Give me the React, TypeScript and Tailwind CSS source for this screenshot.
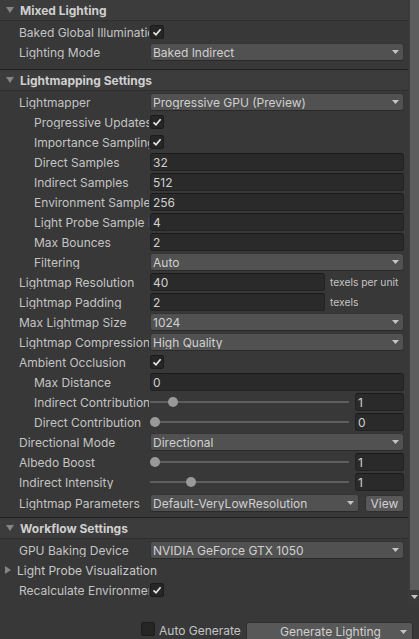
import React from "react";

const Arrow = () => (
  <svg width="7" height="4" viewBox="0 0 7 4" className="shrink-0">
    <path d="M0 0 L7 0 L3.5 4 Z" fill="#c4c4c4" />
  </svg>
);

const Header = ({ title }: { title: string }) => (
  <div className="h-[20px] flex items-center bg-[#3c3c3c] border-b border-[#2e2e2e] box-content">
    <svg width="8" height="6" viewBox="0 0 8 6" className="ml-[6px] mr-[6px] shrink-0">
      <path d="M0 0 L8 0 L4 6 Z" fill="#858585" />
    </svg>
    <span className="font-bold text-[#cfcfcf] pt-[1px]">{title}</span>
  </div>
);

const Row = ({
  label,
  indent = false,
  children,
  h = "h-[20px]",
}: {
  label: string;
  indent?: boolean;
  children?: React.ReactNode;
  h?: string;
}) => (
  <div className={`${h} flex items-center`}>
    <div className={`w-[150px] shrink-0 pr-[1px] pt-[1px] ${indent ? "pl-[34px]" : "pl-[19px]"}`}>
      <div className="overflow-hidden whitespace-nowrap">{label}</div>
    </div>
    <div className="flex-1 min-w-0 pr-[4px] flex items-center">{children}</div>
  </div>
);

const Dropdown = ({ value, className = "flex-1" }: { value: string; className?: string }) => (
  <div
    className={`${className} h-[18px] rounded-[3px] bg-[#515151] border border-[#353535] border-b-[#2a2a2a] flex items-center pl-[2px] pr-[4px] text-[#d0d0d0]`}
  >
    <span className="flex-1 overflow-hidden whitespace-nowrap pt-[1px]">{value}</span>
    <Arrow />
  </div>
);

const Field = ({ value, className = "flex-1" }: { value: string; className?: string }) => (
  <div
    className={`${className} h-[18px] rounded-[3px] bg-[#2a2a2a] border border-[#222222] border-t-[#1a1a1a] flex items-center pl-[2px] pt-[1px] text-[#d0d0d0]`}
  >
    {value}
  </div>
);

const Check = ({ checked = true }: { checked?: boolean }) => (
  <div className="w-[14px] h-[14px] rounded-[2px] bg-[#262626] border border-[#1c1c1c] flex items-center justify-center">
    {checked && (
      <svg width="10" height="10" viewBox="0 0 10 10">
        <path d="M1.5 5.3 L4 7.8 L8.6 2.2" stroke="#e4e4e4" strokeWidth="1.7" fill="none" />
      </svg>
    )}
  </div>
);

const Slider = ({ pos, value }: { pos: number; value: string }) => (
  <div className="flex-1 flex items-center">
    <div className="relative flex-1 h-[18px] mr-[6px]">
      <div className="absolute left-[0px] right-0 top-[8px] h-[2px] bg-[#5e5e5e]" />
      <div
        className="absolute top-[4px] w-[10px] h-[10px] rounded-full bg-[#999999]"
        style={{ left: pos }}
      />
    </div>
    <Field value={value} className="w-[49px]" />
  </div>
);

export default function App() {
  return (
    <div className="w-[419px] h-[639px] overflow-hidden bg-[#383838] flex flex-col text-[12px] text-[#c4c4c4] font-['Inter',sans-serif] leading-none">
      <div className="flex h-[605px] shrink-0">
        <div className="w-[408px] shrink-0 flex flex-col overflow-hidden">
          <Header title="Mixed Lighting" />
          <div className="pt-[1px] pb-[7px] border-b border-[#202020]">
            <Row label="Baked Global Illumination">
              <Check />
            </Row>
            <Row label="Lighting Mode">
              <Dropdown value="Baked Indirect" />
            </Row>
          </div>
          <Header title="Lightmapping Settings" />
          <div className="pt-[1px] pb-[3px] border-b border-[#202020]">
            <Row label="Lightmapper">
              <Dropdown value="Progressive GPU (Preview)" />
            </Row>
            <Row label="Progressive Updates" indent>
              <Check />
            </Row>
            <Row label="Importance Sampling" indent>
              <Check />
            </Row>
            <Row label="Direct Samples" indent>
              <Field value="32" />
            </Row>
            <Row label="Indirect Samples" indent>
              <Field value="512" />
            </Row>
            <Row label="Environment Samples" indent>
              <Field value="256" />
            </Row>
            <Row label="Light Probe Sample Multiplier" indent>
              <Field value="4" />
            </Row>
            <Row label="Max Bounces" indent>
              <Field value="2" />
            </Row>
            <Row label="Filtering" indent>
              <Dropdown value="Auto" />
            </Row>
            <Row label="Lightmap Resolution">
              <Field value="40" className="w-[175px]" />
              <span className="ml-[5px] pt-[1px] text-[10.3px] whitespace-nowrap">texels per unit</span>
            </Row>
            <Row label="Lightmap Padding">
              <Field value="2" className="w-[175px]" />
              <span className="ml-[5px] pt-[1px] text-[10.3px] whitespace-nowrap">texels</span>
            </Row>
            <Row label="Max Lightmap Size">
              <Dropdown value="1024" />
            </Row>
            <Row label="Lightmap Compression">
              <Dropdown value="High Quality" />
            </Row>
            <Row label="Ambient Occlusion">
              <Check />
            </Row>
            <Row label="Max Distance" indent>
              <Field value="0" />
            </Row>
            <Row label="Indirect Contribution" indent>
              <Slider pos={18} value="1" />
            </Row>
            <Row label="Direct Contribution" indent>
              <Slider pos={0} value="0" />
            </Row>
            <Row label="Directional Mode">
              <Dropdown value="Directional" />
            </Row>
            <Row label="Albedo Boost">
              <Slider pos={0} value="1" />
            </Row>
            <Row label="Indirect Intensity">
              <Slider pos={36} value="1" />
            </Row>
            <Row label="Lightmap Parameters" h="h-[22px]">
              <Dropdown value="Default-VeryLowResolution" className="w-[209px]" />
              <div className="ml-[6px] w-[39px] h-[17px] rounded-[3px] bg-[#585858] border border-[#303030] flex items-center justify-center pt-[1px] text-[#d0d0d0]">
                View
              </div>
            </Row>
          </div>
          <Header title="Workflow Settings" />
          <div className="pt-[1px]">
            <Row label="GPU Baking Device">
              <Dropdown value="NVIDIA GeForce GTX 1050" />
            </Row>
            <div className="h-[20px] flex items-center">
              <svg width="6" height="8" viewBox="0 0 6 8" className="ml-[5px] mr-[6px] shrink-0">
                <path d="M0 0 L6 4 L0 8 Z" fill="#858585" />
              </svg>
              <span className="text-[#c8c8c8] pt-[1px]">Light Probe Visualization</span>
            </div>
            <Row label="Recalculate Environment Lighting">
              <Check />
            </Row>
          </div>
        </div>
        <div className="flex-1 flex flex-col bg-[#3a3a3a]">
          <div className="ml-[2px] h-[590px] bg-[#5d5d5d]" />
          <div className="flex justify-center pl-[2px] pt-[5px]">
            <svg width="7" height="4" viewBox="0 0 7 4">
              <path d="M0 0 L7 0 L3.5 4 Z" fill="#c4c4c4" />
            </svg>
          </div>
        </div>
      </div>
      <div className="flex-1 flex items-start pt-[17px]">
        <div className="ml-[141px]">
          <Check checked={false} />
        </div>
        <span className="ml-[4px] mt-[3px] whitespace-nowrap">Auto Generate</span>
        <div className="ml-auto mr-[6px] w-[167px] h-[22px] rounded-t-[3px] bg-[#585858] border border-[#303030] flex items-start pt-[3px] pr-[5px] text-[#d0d0d0]">
          <span className="flex-1 text-center pl-[14px]">Generate Lighting</span>
          <div className="pt-[4px]">
            <Arrow />
          </div>
        </div>
      </div>
    </div>
  );
}
